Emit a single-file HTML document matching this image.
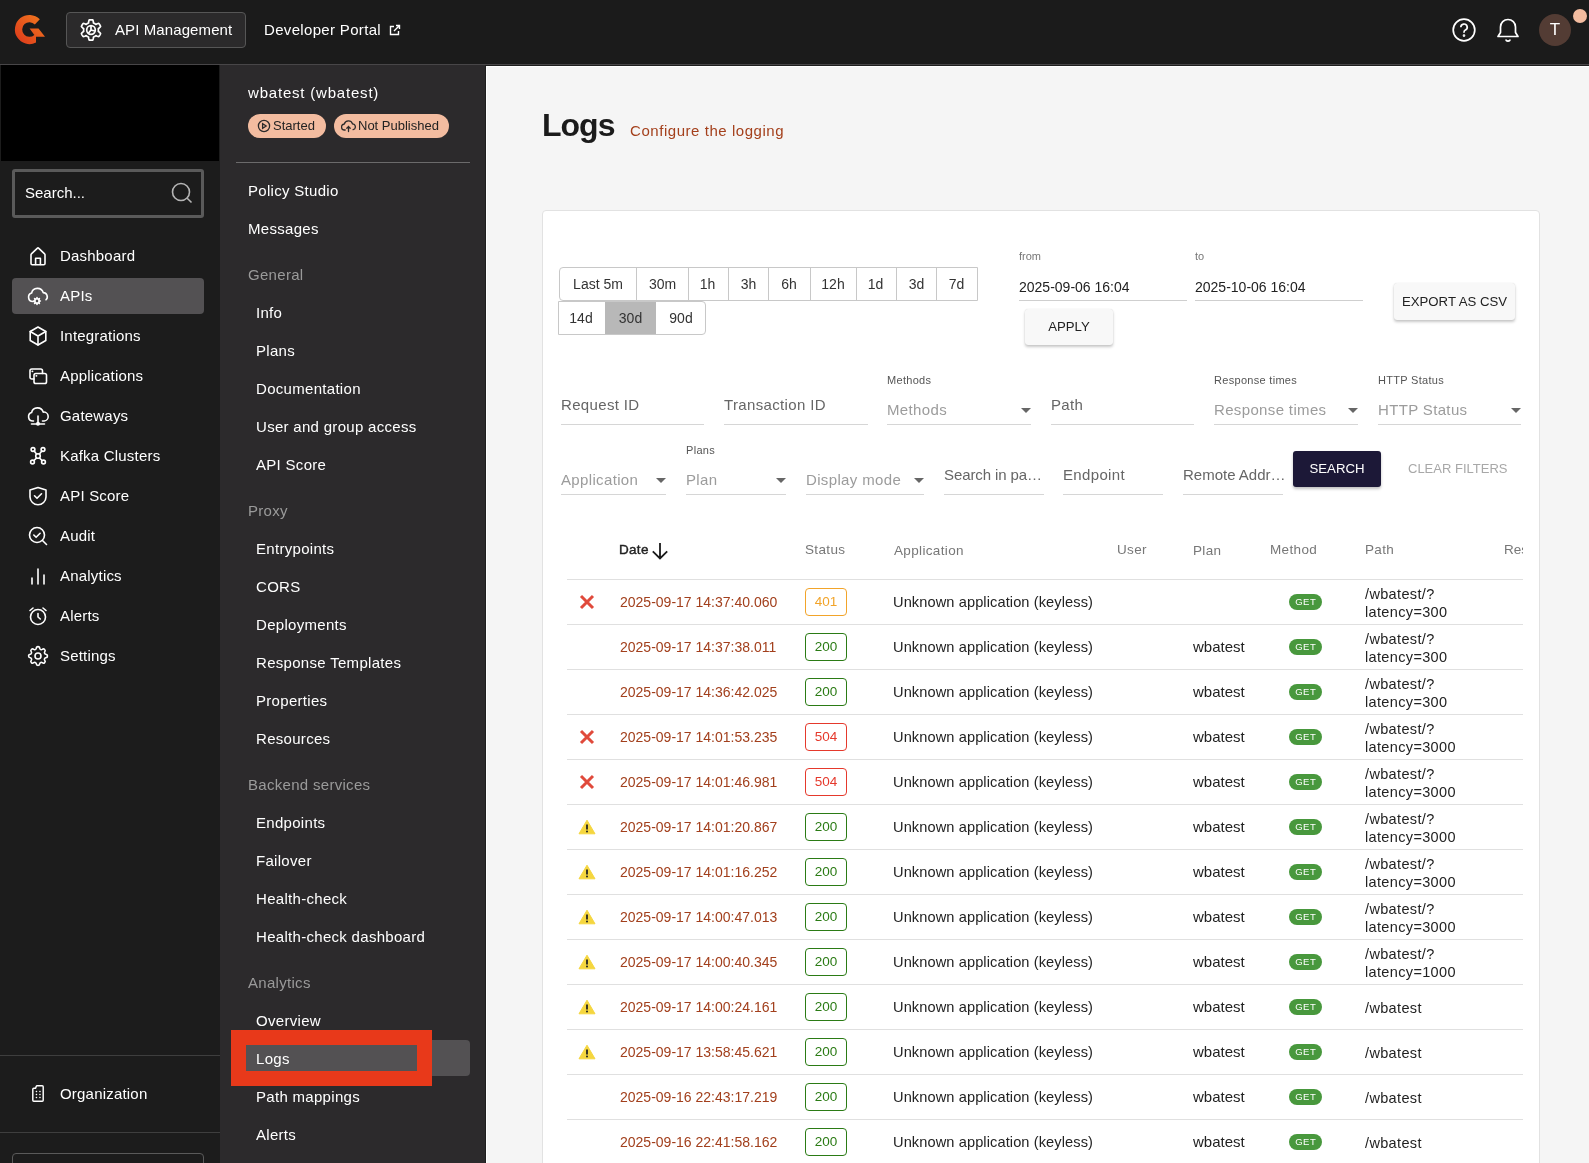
<!DOCTYPE html>
<html><head><meta charset="utf-8">
<style>
*{box-sizing:border-box;margin:0;padding:0}
html,body{width:1589px;height:1163px;overflow:hidden;background:#f5f5f5;font-family:"Liberation Sans",sans-serif;}
.a{position:absolute;white-space:nowrap}
#hdr{position:absolute;left:0;top:0;width:1589px;height:66px;background:#1b1b1b;border-bottom:1px solid #1e1e1e}
#hdr:after{content:"";position:absolute;left:0;top:64px;width:1589px;height:1px;background:#484648}
#side1{position:absolute;left:0;top:65px;width:220px;height:1098px;background:#1c1c1c}
#side2{position:absolute;left:220px;top:65px;width:266px;height:1098px;background:#2c2a2c;border-right:1px solid #1e1e1e}
#mainbg{position:absolute;left:486px;top:66px;width:1103px;height:1097px;background:#f5f5f5;border-left:1px solid #fff;border-top:1px solid #fff}
.nav{position:absolute;left:60px;color:#fff;font-size:15px;line-height:18px;letter-spacing:0.2px}
.ico{position:absolute;left:27px;width:22px;height:22px}
.s2{position:absolute;color:#fff;font-size:15px;line-height:18px;white-space:nowrap;letter-spacing:0.3px}
.s2h{position:absolute;color:#9a9a9a;font-size:15px;line-height:18px;white-space:nowrap;letter-spacing:0.3px}
#card{position:absolute;left:542px;top:210px;width:998px;height:1000px;background:#fff;border:1px solid #e3e3e3;border-radius:4px}
</style></head><body><div id="root" style="position:absolute;left:0;top:0;width:1589px;height:1163px;overflow:hidden;will-change:transform">
<div id="hdr">
<svg class="a" style="left:0;top:0" width="60" height="60" viewBox="0 0 60 60"><defs><linearGradient id="lg" x1="0" y1="1" x2="1" y2="0"><stop offset="0" stop-color="#dc361b"/><stop offset="1" stop-color="#f27c1f"/></linearGradient></defs><path fill="url(#lg)" d="M39.82 19.18 A14.6 14.6 0 1 0 36 42.57 L36 36.8 L45 36.8 L38.5 28.6 L29.6 28.6 L34.38 34.92 A7.3 7.3 0 1 1 34.84 24.52 Z"/></svg>
<div class="a" style="left:66px;top:12px;width:180px;height:36px;border:1px solid #565656;border-radius:4px;background:#2b2a2b"></div>
<svg class="a" style="left:79px;top:18px" width="24" height="24" viewBox="0 0 24 24" fill="none" stroke="#fff" stroke-width="1.7" stroke-linejoin="round"><path d="M12.00 1.80 L12.44 1.81 L12.89 1.84 L13.33 1.89 L13.77 1.95 L14.08 2.63 L14.28 3.50 L14.41 4.37 L14.53 5.05 L14.83 5.16 L15.13 5.29 L15.42 5.44 L15.70 5.59 L15.98 5.76 L16.24 5.94 L16.50 6.13 L16.76 6.33 L17.41 6.10 L18.22 5.78 L19.08 5.52 L19.81 5.44 L20.09 5.79 L20.36 6.15 L20.60 6.52 L20.83 6.90 L21.05 7.29 L21.24 7.69 L21.42 8.10 L21.58 8.51 L21.15 9.11 L20.50 9.72 L19.81 10.27 L19.29 10.72 L19.34 11.03 L19.37 11.36 L19.39 11.68 L19.40 12.00 L19.39 12.32 L19.37 12.64 L19.34 12.97 L19.29 13.28 L19.81 13.73 L20.50 14.28 L21.15 14.89 L21.58 15.49 L21.42 15.90 L21.24 16.31 L21.05 16.71 L20.83 17.10 L20.60 17.48 L20.36 17.85 L20.09 18.21 L19.81 18.56 L19.08 18.48 L18.22 18.22 L17.41 17.90 L16.76 17.67 L16.50 17.87 L16.24 18.06 L15.98 18.24 L15.70 18.41 L15.42 18.56 L15.13 18.71 L14.83 18.84 L14.53 18.95 L14.41 19.63 L14.28 20.50 L14.08 21.37 L13.77 22.05 L13.33 22.11 L12.89 22.16 L12.44 22.19 L12.00 22.20 L11.56 22.19 L11.11 22.16 L10.67 22.11 L10.23 22.05 L9.92 21.37 L9.72 20.50 L9.59 19.63 L9.47 18.95 L9.17 18.84 L8.87 18.71 L8.58 18.56 L8.30 18.41 L8.02 18.24 L7.76 18.06 L7.50 17.87 L7.24 17.67 L6.59 17.90 L5.78 18.22 L4.92 18.48 L4.19 18.56 L3.91 18.21 L3.64 17.85 L3.40 17.48 L3.17 17.10 L2.95 16.71 L2.76 16.31 L2.58 15.90 L2.42 15.49 L2.85 14.89 L3.50 14.28 L4.19 13.73 L4.71 13.28 L4.66 12.97 L4.63 12.64 L4.61 12.32 L4.60 12.00 L4.61 11.68 L4.63 11.36 L4.66 11.03 L4.71 10.72 L4.19 10.27 L3.50 9.72 L2.85 9.11 L2.42 8.51 L2.58 8.10 L2.76 7.69 L2.95 7.29 L3.17 6.90 L3.40 6.52 L3.64 6.15 L3.91 5.79 L4.19 5.44 L4.92 5.52 L5.78 5.78 L6.59 6.10 L7.24 6.33 L7.50 6.13 L7.76 5.94 L8.02 5.76 L8.30 5.59 L8.58 5.44 L8.87 5.29 L9.17 5.16 L9.47 5.05 L9.59 4.37 L9.72 3.50 L9.92 2.63 L10.23 1.95 L10.67 1.89 L11.11 1.84 L11.56 1.81Z"/><circle cx="12" cy="12" r="4.3"/><path d="M12 7.9V12l3.8 1M12 12l-2.6 3.2"/></svg>
<div class="a" style="left:115px;top:21px;color:#fff;font-size:15px;line-height:18px;letter-spacing:0.1px">API Management</div>
<div class="a" style="left:264px;top:21px;color:#fff;font-size:15px;line-height:18px;letter-spacing:0.33px">Developer Portal</div>
<svg class="a" style="left:388px;top:24px" width="13" height="13" viewBox="0 0 13 13" fill="none" stroke="#fff" stroke-width="1.4"><path d="M6 2.5H2.5v8h8V7M8 1.5h3.5V5M11.5 1.5L6 7"/></svg>
<svg class="a" style="left:1451px;top:17px" width="26" height="26" viewBox="0 0 26 26" fill="none" stroke="#fff" stroke-width="1.7"><circle cx="13" cy="13" r="10.8"/><path d="M9.8 10.2a3.2 3.2 0 1 1 4.6 2.9c-.9.5-1.4 1.1-1.4 2.1v.6"/><circle cx="13" cy="18.6" r=".5" fill="#fff"/></svg>
<svg class="a" style="left:1496px;top:17px" width="24" height="26" viewBox="0 0 24 26" fill="none" stroke="#fff" stroke-width="1.7" stroke-linejoin="round"><path d="M2 19.5h20l-2.5-4V10a7.5 7.5 0 0 0-15 0v5.5z"/><path d="M10 22.5a2 1.6 0 0 0 4 0"/></svg>
<div class="a" style="left:1539px;top:14px;width:32px;height:32px;border-radius:50%;background:#533c34;color:#fff;font-size:17px;line-height:32px;text-align:center">T</div>
<div class="a" style="left:1573px;top:9px;width:14px;height:14px;border-radius:50%;background:#f3bca0"></div>
</div>
<div id="side1">
<div class="a" style="left:1px;top:0;width:218px;height:96px;background:#000"></div>
<div class="a" style="left:12px;top:104px;width:192px;height:49px;border:3px solid #5a5a5a;border-radius:3px;background:#1c1c1c"></div>
<div class="a" style="left:25px;top:119px;color:#fff;font-size:15px;line-height:18px">Search...</div>
<svg class="a" style="left:169px;top:115px" width="26" height="26" viewBox="0 0 26 26" fill="none" stroke="#b5b5b5" stroke-width="1.6"><circle cx="12" cy="12" r="8.5"/><path d="M18.2 18.2l4.3 4.3"/></svg>
<div class="a" style="left:12px;top:213px;width:192px;height:36px;border-radius:4px;background:#535153"></div>
<svg class="a" style="left:26px;top:179px" width="24" height="24" viewBox="0 0 24 24" fill="none" stroke="#fff" stroke-width="1.6" stroke-linecap="round" stroke-linejoin="round"><path d="M5 10.8v8.7a1.2 1.2 0 0 0 1.2 1.2h11.6a1.2 1.2 0 0 0 1.2-1.2v-8.7a1.2 1.2 0 0 0-.4-.9L12.8 4.3a1.2 1.2 0 0 0-1.6 0L5.4 9.9a1.2 1.2 0 0 0-.4.9z"/><path d="M9.6 20.5v-6.2h4.8v6.2"/></svg>
<div class="nav" style="top:182px">Dashboard</div>
<svg class="a" style="left:26px;top:219px" width="24" height="24" viewBox="0 0 24 24" fill="none" stroke="#fff" stroke-width="1.6" stroke-linecap="round" stroke-linejoin="round"><path d="M7.5 17.5H6.8A4.3 4.3 0 0 1 5.6 9.1 6 6 0 0 1 17.2 8.6a4.2 4.2 0 0 1 2.8 7.2"/><circle cx="11" cy="17" r="2.2"/><path d="M11 13.6v1.2M11 19.2v1.2M7.6 17h1.2M13.2 17h1.2M8.6 14.6l.8.8M12.6 18.6l.8.8M8.6 19.4l.8-.8M12.6 15.4l.8-.8"/></svg>
<div class="nav" style="top:222px">APIs</div>
<svg class="a" style="left:26px;top:259px" width="24" height="24" viewBox="0 0 24 24" fill="none" stroke="#fff" stroke-width="1.6" stroke-linecap="round" stroke-linejoin="round"><path d="M12 3l7.8 4.5v9L12 21l-7.8-4.5v-9z"/><path d="M4.2 7.5L12 12l7.8-4.5M12 12v9"/></svg>
<div class="nav" style="top:262px">Integrations</div>
<svg class="a" style="left:26px;top:299px" width="24" height="24" viewBox="0 0 24 24" fill="none" stroke="#fff" stroke-width="1.6" stroke-linecap="round" stroke-linejoin="round"><rect x="8" y="9.5" width="12.5" height="10" rx="1.8"/><path d="M16.5 9.5V6.8A1.8 1.8 0 0 0 14.7 5H5.8A1.8 1.8 0 0 0 4 6.8v6.4A1.8 1.8 0 0 0 5.8 15H8"/><path d="M6.3 7.3h.2M10.3 11.8h.2" stroke-width="1.8"/></svg>
<div class="nav" style="top:302px">Applications</div>
<svg class="a" style="left:26px;top:339px" width="24" height="24" viewBox="0 0 24 24" fill="none" stroke="#fff" stroke-width="1.6" stroke-linecap="round" stroke-linejoin="round"><path d="M7.5 17H6.8A4.3 4.3 0 0 1 5.6 8.6 6 6 0 0 1 17.2 8.1a4.2 4.2 0 0 1 1 8.9H16.5"/><path d="M12 12v6.5M5.5 20h13"/><circle cx="12" cy="19.8" r="1.2"/></svg>
<div class="nav" style="top:342px">Gateways</div>
<svg class="a" style="left:26px;top:379px" width="24" height="24" viewBox="0 0 24 24" fill="none" stroke="#fff" stroke-width="1.6" stroke-linecap="round" stroke-linejoin="round"><circle cx="7" cy="5.5" r="1.9"/><circle cx="17" cy="5.5" r="1.9"/><circle cx="6.5" cy="18" r="1.9"/><circle cx="17.5" cy="18" r="1.9"/><path d="M8.2 7l2.3 3M15.8 7l-2.3 3M8 16.5l2.4-2.4M16 16.5l-2.4-2.4"/><circle cx="12" cy="12" r="2.3"/></svg>
<div class="nav" style="top:382px">Kafka Clusters</div>
<svg class="a" style="left:26px;top:419px" width="24" height="24" viewBox="0 0 24 24" fill="none" stroke="#fff" stroke-width="1.6" stroke-linecap="round" stroke-linejoin="round"><path d="M12 3.5l8 2.5v7a8 8 0 0 1-8 7.8 8 8 0 0 1-8-7.8V6z"/><path d="M8.5 11.8l2.5 2.5 4.5-4.5"/></svg>
<div class="nav" style="top:422px">API Score</div>
<svg class="a" style="left:26px;top:459px" width="24" height="24" viewBox="0 0 24 24" fill="none" stroke="#fff" stroke-width="1.6" stroke-linecap="round" stroke-linejoin="round"><circle cx="11" cy="11" r="7.5"/><path d="M16.5 16.5l4 4M7.8 11l2.3 2.3 4-4"/></svg>
<div class="nav" style="top:462px">Audit</div>
<svg class="a" style="left:26px;top:499px" width="24" height="24" viewBox="0 0 24 24" fill="none" stroke="#fff" stroke-width="1.6" stroke-linecap="round" stroke-linejoin="round"><path d="M6 20v-6M12 20V5M18 20v-9"/></svg>
<div class="nav" style="top:502px">Analytics</div>
<svg class="a" style="left:26px;top:539px" width="24" height="24" viewBox="0 0 24 24" fill="none" stroke="#fff" stroke-width="1.6" stroke-linecap="round" stroke-linejoin="round"><circle cx="12" cy="13" r="7.5"/><path d="M12 9.5V13l2.3 2M4 6.5l3-2.5M20 6.5l-3-2.5"/></svg>
<div class="nav" style="top:542px">Alerts</div>
<svg class="a" style="left:26px;top:579px" width="24" height="24" viewBox="0 0 24 24" fill="none" stroke="#fff" stroke-width="1.6" stroke-linecap="round" stroke-linejoin="round"><path d="M10.3 4.3a1.7 1.7 0 0 1 3.4 0 1.7 1.7 0 0 0 2.6 1.1 1.7 1.7 0 0 1 2.4 2.4 1.7 1.7 0 0 0 1 2.5 1.7 1.7 0 0 1 0 3.4 1.7 1.7 0 0 0-1 2.6 1.7 1.7 0 0 1-2.4 2.4 1.7 1.7 0 0 0-2.6 1 1.7 1.7 0 0 1-3.4 0 1.7 1.7 0 0 0-2.6-1 1.7 1.7 0 0 1-2.4-2.4 1.7 1.7 0 0 0-1-2.6 1.7 1.7 0 0 1 0-3.4 1.7 1.7 0 0 0 1-2.5A1.7 1.7 0 0 1 7.7 5.4a1.7 1.7 0 0 0 2.6-1.1z"/><circle cx="12" cy="12" r="3"/></svg>
<div class="nav" style="top:582px">Settings</div>
<div class="a" style="left:0;top:990px;width:220px;height:1px;background:#3e3e3e"></div>
<svg class="a" style="left:26px;top:1016px" width="24" height="24" viewBox="0 0 24 24" fill="none" stroke="#fff" stroke-width="1.45" stroke-linecap="round" stroke-linejoin="round"><path d="M6.8 19.3V8.2a1 1 0 0 1 1-1h1.8l.6-1.8a1 1 0 0 1 1-.7h5a1 1 0 0 1 1 1v13.6a1 1 0 0 1-1 1H7.8a1 1 0 0 1-1-1z"/><path d="M10.4 10.5h.1M13.9 10.5h.1M10.4 13.5h.1M13.9 13.5h.1M10.4 16.5h.1M13.9 16.5h.1" stroke-width="1.5"/></svg>
<div class="nav" style="top:1020px">Organization</div>
<div class="a" style="left:0;top:1067px;width:220px;height:1px;background:#3e3e3e"></div>
<div class="a" style="left:12px;top:1088px;width:192px;height:40px;border:1px solid #5a5a5a;border-radius:4px"></div>
</div>
<div id="side2">
<div class="s2" style="left:28px;top:19px;letter-spacing:0.8px">wbatest (wbatest)</div>
<div class="a" style="left:28px;top:49px;width:78px;height:24px;border-radius:12px;background:#f3bca0"></div>
<svg class="a" style="left:37px;top:54px" width="14" height="14" viewBox="0 0 14 14" fill="none" stroke="#2b2a2b" stroke-width="1.3"><circle cx="7" cy="7" r="5.6" /><path d="M5.6 4.6v4.8L9.2 7z" fill="none"/></svg>
<div class="a" style="left:53px;top:52px;color:#222;font-size:13px;line-height:18px">Started</div>
<div class="a" style="left:114px;top:49px;width:115px;height:24px;border-radius:12px;background:#f3bca0"></div>
<svg class="a" style="left:121px;top:54px" width="15" height="14" viewBox="0 0 15 14" fill="none" stroke="#2b2a2b" stroke-width="1.3" stroke-linecap="round"><path d="M4.2 11H3.8A3 3 0 0 1 3.3 5 4.3 4.3 0 0 1 11.5 4.8a3 3 0 0 1 .6 5.9"/><path d="M7.5 12.5V7.5M5.8 9.2l1.7-1.7 1.7 1.7"/></svg>
<div class="a" style="left:138px;top:52px;color:#222;font-size:13px;line-height:18px">Not Published</div>
<div class="a" style="left:16px;top:97px;width:234px;height:1px;background:#6b6a6b"></div>
<div class="s2" style="left:28px;top:117px">Policy Studio</div>
<div class="s2" style="left:28px;top:155px">Messages</div>
<div class="s2h" style="left:28px;top:201px">General</div>
<div class="s2" style="left:36px;top:239px">Info</div>
<div class="s2" style="left:36px;top:277px">Plans</div>
<div class="s2" style="left:36px;top:315px">Documentation</div>
<div class="s2" style="left:36px;top:353px">User and group access</div>
<div class="s2" style="left:36px;top:391px">API Score</div>
<div class="s2h" style="left:28px;top:437px">Proxy</div>
<div class="s2" style="left:36px;top:475px">Entrypoints</div>
<div class="s2" style="left:36px;top:513px">CORS</div>
<div class="s2" style="left:36px;top:551px">Deployments</div>
<div class="s2" style="left:36px;top:589px">Response Templates</div>
<div class="s2" style="left:36px;top:627px">Properties</div>
<div class="s2" style="left:36px;top:665px">Resources</div>
<div class="s2h" style="left:28px;top:711px">Backend services</div>
<div class="s2" style="left:36px;top:749px">Endpoints</div>
<div class="s2" style="left:36px;top:787px">Failover</div>
<div class="s2" style="left:36px;top:825px">Health-check</div>
<div class="s2" style="left:36px;top:863px">Health-check dashboard</div>
<div class="s2h" style="left:28px;top:909px">Analytics</div>
<div class="s2" style="left:36px;top:947px">Overview</div>
<div class="a" style="left:16px;top:975px;width:234px;height:36px;border-radius:4px;background:#535153"></div>
<div class="a" style="left:11px;top:965px;width:201px;height:56px;border:15px solid #e8391a"></div>
<div class="s2" style="left:36px;top:985px">Logs</div>
<div class="s2" style="left:36px;top:1023px">Path mappings</div>
<div class="s2" style="left:36px;top:1061px">Alerts</div>
</div>
<div id="mainbg"></div>
<div id="main">
<div class="a" style="left:542px;top:107px;color:#1b1b1b;font-size:32px;line-height:36px;font-weight:bold;letter-spacing:-1px">Logs</div>
<div class="a" style="left:630px;top:122px;color:#a4401c;font-size:15px;line-height:18px;letter-spacing:0.55px">Configure the logging</div>
<div class="a" style="left:542px;top:210px;width:998px;height:1000px;background:#fff;border:1px solid #e2e2e2;border-radius:4px"></div>
<div class="a" style="left:559px;top:267px;width:419px;height:34px;border:1px solid #c8c8c8;border-radius:4px 0 0 4px"></div>
<div class="a" style="left:560px;top:275px;width:76px;text-align:center;color:#333;font-size:14px;line-height:18px">Last 5m</div>
<div class="a" style="left:636px;top:268px;width:1px;height:32px;background:#c8c8c8"></div>
<div class="a" style="left:636px;top:275px;width:53px;text-align:center;color:#333;font-size:14px;line-height:18px">30m</div>
<div class="a" style="left:688px;top:268px;width:1px;height:32px;background:#c8c8c8"></div>
<div class="a" style="left:688px;top:275px;width:39px;text-align:center;color:#333;font-size:14px;line-height:18px">1h</div>
<div class="a" style="left:728px;top:268px;width:1px;height:32px;background:#c8c8c8"></div>
<div class="a" style="left:728px;top:275px;width:41px;text-align:center;color:#333;font-size:14px;line-height:18px">3h</div>
<div class="a" style="left:768px;top:268px;width:1px;height:32px;background:#c8c8c8"></div>
<div class="a" style="left:768px;top:275px;width:42px;text-align:center;color:#333;font-size:14px;line-height:18px">6h</div>
<div class="a" style="left:810px;top:268px;width:1px;height:32px;background:#c8c8c8"></div>
<div class="a" style="left:810px;top:275px;width:46px;text-align:center;color:#333;font-size:14px;line-height:18px">12h</div>
<div class="a" style="left:856px;top:268px;width:1px;height:32px;background:#c8c8c8"></div>
<div class="a" style="left:856px;top:275px;width:39px;text-align:center;color:#333;font-size:14px;line-height:18px">1d</div>
<div class="a" style="left:896px;top:268px;width:1px;height:32px;background:#c8c8c8"></div>
<div class="a" style="left:896px;top:275px;width:41px;text-align:center;color:#333;font-size:14px;line-height:18px">3d</div>
<div class="a" style="left:936px;top:268px;width:1px;height:32px;background:#c8c8c8"></div>
<div class="a" style="left:936px;top:275px;width:41px;text-align:center;color:#333;font-size:14px;line-height:18px">7d</div>
<div class="a" style="left:558px;top:301px;width:148px;height:34px;border:1px solid #c8c8c8;border-radius:0 4px 4px 0;background:#fff"></div>
<div class="a" style="left:605px;top:302px;width:51px;height:32px;background:#b8b8b8"></div>
<div class="a" style="left:558px;top:309px;width:46px;text-align:center;color:#333;font-size:14px;line-height:18px">14d</div>
<div class="a" style="left:605px;top:309px;width:51px;text-align:center;color:#333;font-size:14px;line-height:18px">30d</div>
<div class="a" style="left:656px;top:309px;width:50px;text-align:center;color:#333;font-size:14px;line-height:18px">90d</div>
<div class="a" style="left:1019px;top:249px;color:#777;font-size:11px;line-height:14px">from</div>
<div class="a" style="left:1019px;top:279px;color:#222;font-size:14px;line-height:16px">2025-09-06 16:04</div>
<div class="a" style="left:1019px;top:300px;width:168px;height:1px;background:#cfcfcf"></div>
<div class="a" style="left:1195px;top:249px;color:#777;font-size:11px;line-height:14px">to</div>
<div class="a" style="left:1195px;top:279px;color:#222;font-size:14px;line-height:16px">2025-10-06 16:04</div>
<div class="a" style="left:1195px;top:300px;width:168px;height:1px;background:#cfcfcf"></div>
<div class="a" style="left:1025px;top:309px;width:88px;height:36px;background:#f8f8f8;border-radius:3px;box-shadow:0 2px 3px rgba(0,0,0,.22),0 0 1px rgba(0,0,0,.15);color:#222;font-size:13.2px;line-height:36px;text-align:center">APPLY</div>
<div class="a" style="left:1394px;top:283px;width:121px;height:37px;background:#f8f8f8;border-radius:3px;box-shadow:0 2px 3px rgba(0,0,0,.22),0 0 1px rgba(0,0,0,.15);color:#222;font-size:13.2px;line-height:37px;text-align:center">EXPORT AS CSV</div>
<div class="a" style="left:561px;top:396px;color:#666;font-size:15px;line-height:18px;letter-spacing:0.35px">Request ID</div>
<div class="a" style="left:561px;top:424px;width:143px;height:1px;background:#d6d6d6"></div>
<div class="a" style="left:724px;top:396px;color:#666;font-size:15px;line-height:18px;letter-spacing:0.35px">Transaction ID</div>
<div class="a" style="left:724px;top:424px;width:144px;height:1px;background:#d6d6d6"></div>
<div class="a" style="left:887px;top:374px;color:#555;font-size:11px;line-height:13px;letter-spacing:0.3px">Methods</div>
<div class="a" style="left:887px;top:401px;color:#9c9c9c;font-size:15px;line-height:18px;letter-spacing:0.35px">Methods</div>
<div class="a" style="left:1021px;top:408px;width:0;height:0;border-left:5px solid transparent;border-right:5px solid transparent;border-top:5px solid #666"></div>
<div class="a" style="left:887px;top:424px;width:144px;height:1px;background:#d6d6d6"></div>
<div class="a" style="left:1051px;top:396px;color:#666;font-size:15px;line-height:18px;letter-spacing:0.35px">Path</div>
<div class="a" style="left:1051px;top:424px;width:143px;height:1px;background:#d6d6d6"></div>
<div class="a" style="left:1214px;top:374px;color:#555;font-size:11px;line-height:13px;letter-spacing:0.3px">Response times</div>
<div class="a" style="left:1214px;top:401px;color:#9c9c9c;font-size:15px;line-height:18px;letter-spacing:0.35px">Response times</div>
<div class="a" style="left:1348px;top:408px;width:0;height:0;border-left:5px solid transparent;border-right:5px solid transparent;border-top:5px solid #666"></div>
<div class="a" style="left:1214px;top:424px;width:144px;height:1px;background:#d6d6d6"></div>
<div class="a" style="left:1378px;top:374px;color:#555;font-size:11px;line-height:13px;letter-spacing:0.3px">HTTP Status</div>
<div class="a" style="left:1378px;top:401px;color:#9c9c9c;font-size:15px;line-height:18px;letter-spacing:0.35px">HTTP Status</div>
<div class="a" style="left:1511px;top:408px;width:0;height:0;border-left:5px solid transparent;border-right:5px solid transparent;border-top:5px solid #666"></div>
<div class="a" style="left:1378px;top:424px;width:143px;height:1px;background:#d6d6d6"></div>
<div class="a" style="left:561px;top:471px;color:#9c9c9c;font-size:15px;line-height:18px;letter-spacing:0.35px">Application</div>
<div class="a" style="left:656px;top:478px;width:0;height:0;border-left:5px solid transparent;border-right:5px solid transparent;border-top:5px solid #666"></div>
<div class="a" style="left:561px;top:494px;width:105px;height:1px;background:#d6d6d6"></div>
<div class="a" style="left:686px;top:444px;color:#555;font-size:11px;line-height:13px;letter-spacing:0.3px">Plans</div>
<div class="a" style="left:686px;top:471px;color:#9c9c9c;font-size:15px;line-height:18px;letter-spacing:0.35px">Plan</div>
<div class="a" style="left:776px;top:478px;width:0;height:0;border-left:5px solid transparent;border-right:5px solid transparent;border-top:5px solid #666"></div>
<div class="a" style="left:686px;top:494px;width:100px;height:1px;background:#d6d6d6"></div>
<div class="a" style="left:806px;top:471px;color:#9c9c9c;font-size:15px;line-height:18px;letter-spacing:0.35px">Display mode</div>
<div class="a" style="left:914px;top:478px;width:0;height:0;border-left:5px solid transparent;border-right:5px solid transparent;border-top:5px solid #666"></div>
<div class="a" style="left:806px;top:494px;width:118px;height:1px;background:#d6d6d6"></div>
<div class="a" style="left:944px;top:466px;color:#666;font-size:15px;line-height:18px;letter-spacing:-0.1px">Search in pa…</div>
<div class="a" style="left:944px;top:494px;width:100px;height:1px;background:#d6d6d6"></div>
<div class="a" style="left:1063px;top:466px;color:#666;font-size:15px;line-height:18px;letter-spacing:0.35px">Endpoint</div>
<div class="a" style="left:1063px;top:494px;width:100px;height:1px;background:#d6d6d6"></div>
<div class="a" style="left:1183px;top:466px;color:#666;font-size:15px;line-height:18px;letter-spacing:0px">Remote Addr…</div>
<div class="a" style="left:1183px;top:494px;width:100px;height:1px;background:#d6d6d6"></div>
<div class="a" style="left:1293px;top:451px;width:88px;height:36px;background:#1c1837;border-radius:3px;box-shadow:0 2px 3px rgba(0,0,0,.25);color:#fff;font-size:13.2px;line-height:36px;text-align:center">SEARCH</div>
<div class="a" style="left:1408px;top:461px;color:#a8a8a8;font-size:13px;line-height:16px">CLEAR FILTERS</div>
<div class="a" style="left:619px;top:542px;color:#222;font-size:13.5px;line-height:16px;-webkit-text-stroke:0.4px #222;letter-spacing:0.3px">Date</div>
<svg class="a" style="left:651px;top:542px" width="18" height="18" viewBox="0 0 18 18" fill="none" stroke="#1a1a1a" stroke-width="1.8"><path d="M9 1v15.5M1.8 9.3l7.2 7.2 7.2-7.2"/></svg>
<div class="a" style="left:805px;top:542px;color:#777;font-size:13.5px;line-height:16px;letter-spacing:0.35px">Status</div>
<div class="a" style="left:894px;top:543px;color:#777;font-size:13.5px;line-height:16px;letter-spacing:0.35px">Application</div>
<div class="a" style="left:1117px;top:542px;color:#777;font-size:13.5px;line-height:16px;letter-spacing:0.35px">User</div>
<div class="a" style="left:1193px;top:543px;color:#777;font-size:13.5px;line-height:16px;letter-spacing:0.35px">Plan</div>
<div class="a" style="left:1270px;top:542px;color:#777;font-size:13.5px;line-height:16px;letter-spacing:0.35px">Method</div>
<div class="a" style="left:1365px;top:542px;color:#777;font-size:13.5px;line-height:16px;letter-spacing:0.35px">Path</div>
<div class="a" style="left:1504px;top:542px;width:19px;overflow:hidden;color:#777;font-size:13.5px;line-height:16px">Response</div>
<div class="a" style="left:567px;top:579px;width:956px;height:1px;background:#e0e0e0"></div>
<svg class="a" style="left:579px;top:594px" width="16" height="16" viewBox="0 0 16 16" stroke="#e04a3b" stroke-width="3"><path d="M2 2l12 12M14 2L2 14"/></svg>
<div class="a" style="left:620px;top:594px;color:#a23f1c;font-size:14px;line-height:16px">2025-09-17 14:37:40.060</div>
<div class="a" style="left:805px;top:588px;width:42px;height:28px;border:1px solid #f2a42a;border-radius:4px;color:#f2a42a;font-size:13.5px;line-height:26px;text-align:center">401</div>
<div class="a" style="left:893px;top:594px;color:#222;font-size:14.6px;line-height:16px;letter-spacing:0.1px">Unknown application (keyless)</div>
<div class="a" style="left:1289px;top:594px;width:33px;height:16px;border-radius:8px;background:#48983d;color:#fff;font-size:9.5px;line-height:16px;text-align:center;letter-spacing:0.6px;text-indent:0.6px">GET</div>
<div class="a" style="left:1365px;top:585px;color:#222;font-size:14.5px;line-height:18px;letter-spacing:0.35px">/wbatest/?<br>latency=300</div>
<div class="a" style="left:567px;top:624px;width:956px;height:1px;background:#e0e0e0"></div>
<div class="a" style="left:620px;top:639px;color:#a23f1c;font-size:14px;line-height:16px">2025-09-17 14:37:38.011</div>
<div class="a" style="left:805px;top:633px;width:42px;height:28px;border:1px solid #2b7b15;border-radius:4px;color:#2b7b15;font-size:13.5px;line-height:26px;text-align:center">200</div>
<div class="a" style="left:893px;top:639px;color:#222;font-size:14.6px;line-height:16px;letter-spacing:0.1px">Unknown application (keyless)</div>
<div class="a" style="left:1193px;top:639px;color:#222;font-size:15px;line-height:16px">wbatest</div>
<div class="a" style="left:1289px;top:639px;width:33px;height:16px;border-radius:8px;background:#48983d;color:#fff;font-size:9.5px;line-height:16px;text-align:center;letter-spacing:0.6px;text-indent:0.6px">GET</div>
<div class="a" style="left:1365px;top:630px;color:#222;font-size:14.5px;line-height:18px;letter-spacing:0.35px">/wbatest/?<br>latency=300</div>
<div class="a" style="left:567px;top:669px;width:956px;height:1px;background:#e0e0e0"></div>
<div class="a" style="left:620px;top:684px;color:#a23f1c;font-size:14px;line-height:16px">2025-09-17 14:36:42.025</div>
<div class="a" style="left:805px;top:678px;width:42px;height:28px;border:1px solid #2b7b15;border-radius:4px;color:#2b7b15;font-size:13.5px;line-height:26px;text-align:center">200</div>
<div class="a" style="left:893px;top:684px;color:#222;font-size:14.6px;line-height:16px;letter-spacing:0.1px">Unknown application (keyless)</div>
<div class="a" style="left:1193px;top:684px;color:#222;font-size:15px;line-height:16px">wbatest</div>
<div class="a" style="left:1289px;top:684px;width:33px;height:16px;border-radius:8px;background:#48983d;color:#fff;font-size:9.5px;line-height:16px;text-align:center;letter-spacing:0.6px;text-indent:0.6px">GET</div>
<div class="a" style="left:1365px;top:675px;color:#222;font-size:14.5px;line-height:18px;letter-spacing:0.35px">/wbatest/?<br>latency=300</div>
<div class="a" style="left:567px;top:714px;width:956px;height:1px;background:#e0e0e0"></div>
<svg class="a" style="left:579px;top:729px" width="16" height="16" viewBox="0 0 16 16" stroke="#e04a3b" stroke-width="3"><path d="M2 2l12 12M14 2L2 14"/></svg>
<div class="a" style="left:620px;top:729px;color:#a23f1c;font-size:14px;line-height:16px">2025-09-17 14:01:53.235</div>
<div class="a" style="left:805px;top:723px;width:42px;height:28px;border:1px solid #e5392c;border-radius:4px;color:#e5392c;font-size:13.5px;line-height:26px;text-align:center">504</div>
<div class="a" style="left:893px;top:729px;color:#222;font-size:14.6px;line-height:16px;letter-spacing:0.1px">Unknown application (keyless)</div>
<div class="a" style="left:1193px;top:729px;color:#222;font-size:15px;line-height:16px">wbatest</div>
<div class="a" style="left:1289px;top:729px;width:33px;height:16px;border-radius:8px;background:#48983d;color:#fff;font-size:9.5px;line-height:16px;text-align:center;letter-spacing:0.6px;text-indent:0.6px">GET</div>
<div class="a" style="left:1365px;top:720px;color:#222;font-size:14.5px;line-height:18px;letter-spacing:0.35px">/wbatest/?<br>latency=3000</div>
<div class="a" style="left:567px;top:759px;width:956px;height:1px;background:#e0e0e0"></div>
<svg class="a" style="left:579px;top:774px" width="16" height="16" viewBox="0 0 16 16" stroke="#e04a3b" stroke-width="3"><path d="M2 2l12 12M14 2L2 14"/></svg>
<div class="a" style="left:620px;top:774px;color:#a23f1c;font-size:14px;line-height:16px">2025-09-17 14:01:46.981</div>
<div class="a" style="left:805px;top:768px;width:42px;height:28px;border:1px solid #e5392c;border-radius:4px;color:#e5392c;font-size:13.5px;line-height:26px;text-align:center">504</div>
<div class="a" style="left:893px;top:774px;color:#222;font-size:14.6px;line-height:16px;letter-spacing:0.1px">Unknown application (keyless)</div>
<div class="a" style="left:1193px;top:774px;color:#222;font-size:15px;line-height:16px">wbatest</div>
<div class="a" style="left:1289px;top:774px;width:33px;height:16px;border-radius:8px;background:#48983d;color:#fff;font-size:9.5px;line-height:16px;text-align:center;letter-spacing:0.6px;text-indent:0.6px">GET</div>
<div class="a" style="left:1365px;top:765px;color:#222;font-size:14.5px;line-height:18px;letter-spacing:0.35px">/wbatest/?<br>latency=3000</div>
<div class="a" style="left:567px;top:804px;width:956px;height:1px;background:#e0e0e0"></div>
<svg class="a" style="left:578px;top:819px" width="18" height="16" viewBox="0 0 18 16"><path d="M9 1.2L17 14.8H1z" fill="#f5d63f" stroke="#f5d63f" stroke-width="1" stroke-linejoin="round"/><path d="M9 5.5v5" stroke="#222" stroke-width="1.8"/><circle cx="9" cy="12.6" r="1" fill="#222"/></svg>
<div class="a" style="left:620px;top:819px;color:#a23f1c;font-size:14px;line-height:16px">2025-09-17 14:01:20.867</div>
<div class="a" style="left:805px;top:813px;width:42px;height:28px;border:1px solid #2b7b15;border-radius:4px;color:#2b7b15;font-size:13.5px;line-height:26px;text-align:center">200</div>
<div class="a" style="left:893px;top:819px;color:#222;font-size:14.6px;line-height:16px;letter-spacing:0.1px">Unknown application (keyless)</div>
<div class="a" style="left:1193px;top:819px;color:#222;font-size:15px;line-height:16px">wbatest</div>
<div class="a" style="left:1289px;top:819px;width:33px;height:16px;border-radius:8px;background:#48983d;color:#fff;font-size:9.5px;line-height:16px;text-align:center;letter-spacing:0.6px;text-indent:0.6px">GET</div>
<div class="a" style="left:1365px;top:810px;color:#222;font-size:14.5px;line-height:18px;letter-spacing:0.35px">/wbatest/?<br>latency=3000</div>
<div class="a" style="left:567px;top:849px;width:956px;height:1px;background:#e0e0e0"></div>
<svg class="a" style="left:578px;top:864px" width="18" height="16" viewBox="0 0 18 16"><path d="M9 1.2L17 14.8H1z" fill="#f5d63f" stroke="#f5d63f" stroke-width="1" stroke-linejoin="round"/><path d="M9 5.5v5" stroke="#222" stroke-width="1.8"/><circle cx="9" cy="12.6" r="1" fill="#222"/></svg>
<div class="a" style="left:620px;top:864px;color:#a23f1c;font-size:14px;line-height:16px">2025-09-17 14:01:16.252</div>
<div class="a" style="left:805px;top:858px;width:42px;height:28px;border:1px solid #2b7b15;border-radius:4px;color:#2b7b15;font-size:13.5px;line-height:26px;text-align:center">200</div>
<div class="a" style="left:893px;top:864px;color:#222;font-size:14.6px;line-height:16px;letter-spacing:0.1px">Unknown application (keyless)</div>
<div class="a" style="left:1193px;top:864px;color:#222;font-size:15px;line-height:16px">wbatest</div>
<div class="a" style="left:1289px;top:864px;width:33px;height:16px;border-radius:8px;background:#48983d;color:#fff;font-size:9.5px;line-height:16px;text-align:center;letter-spacing:0.6px;text-indent:0.6px">GET</div>
<div class="a" style="left:1365px;top:855px;color:#222;font-size:14.5px;line-height:18px;letter-spacing:0.35px">/wbatest/?<br>latency=3000</div>
<div class="a" style="left:567px;top:894px;width:956px;height:1px;background:#e0e0e0"></div>
<svg class="a" style="left:578px;top:909px" width="18" height="16" viewBox="0 0 18 16"><path d="M9 1.2L17 14.8H1z" fill="#f5d63f" stroke="#f5d63f" stroke-width="1" stroke-linejoin="round"/><path d="M9 5.5v5" stroke="#222" stroke-width="1.8"/><circle cx="9" cy="12.6" r="1" fill="#222"/></svg>
<div class="a" style="left:620px;top:909px;color:#a23f1c;font-size:14px;line-height:16px">2025-09-17 14:00:47.013</div>
<div class="a" style="left:805px;top:903px;width:42px;height:28px;border:1px solid #2b7b15;border-radius:4px;color:#2b7b15;font-size:13.5px;line-height:26px;text-align:center">200</div>
<div class="a" style="left:893px;top:909px;color:#222;font-size:14.6px;line-height:16px;letter-spacing:0.1px">Unknown application (keyless)</div>
<div class="a" style="left:1193px;top:909px;color:#222;font-size:15px;line-height:16px">wbatest</div>
<div class="a" style="left:1289px;top:909px;width:33px;height:16px;border-radius:8px;background:#48983d;color:#fff;font-size:9.5px;line-height:16px;text-align:center;letter-spacing:0.6px;text-indent:0.6px">GET</div>
<div class="a" style="left:1365px;top:900px;color:#222;font-size:14.5px;line-height:18px;letter-spacing:0.35px">/wbatest/?<br>latency=3000</div>
<div class="a" style="left:567px;top:939px;width:956px;height:1px;background:#e0e0e0"></div>
<svg class="a" style="left:578px;top:954px" width="18" height="16" viewBox="0 0 18 16"><path d="M9 1.2L17 14.8H1z" fill="#f5d63f" stroke="#f5d63f" stroke-width="1" stroke-linejoin="round"/><path d="M9 5.5v5" stroke="#222" stroke-width="1.8"/><circle cx="9" cy="12.6" r="1" fill="#222"/></svg>
<div class="a" style="left:620px;top:954px;color:#a23f1c;font-size:14px;line-height:16px">2025-09-17 14:00:40.345</div>
<div class="a" style="left:805px;top:948px;width:42px;height:28px;border:1px solid #2b7b15;border-radius:4px;color:#2b7b15;font-size:13.5px;line-height:26px;text-align:center">200</div>
<div class="a" style="left:893px;top:954px;color:#222;font-size:14.6px;line-height:16px;letter-spacing:0.1px">Unknown application (keyless)</div>
<div class="a" style="left:1193px;top:954px;color:#222;font-size:15px;line-height:16px">wbatest</div>
<div class="a" style="left:1289px;top:954px;width:33px;height:16px;border-radius:8px;background:#48983d;color:#fff;font-size:9.5px;line-height:16px;text-align:center;letter-spacing:0.6px;text-indent:0.6px">GET</div>
<div class="a" style="left:1365px;top:945px;color:#222;font-size:14.5px;line-height:18px;letter-spacing:0.35px">/wbatest/?<br>latency=1000</div>
<div class="a" style="left:567px;top:984px;width:956px;height:1px;background:#e0e0e0"></div>
<svg class="a" style="left:578px;top:999px" width="18" height="16" viewBox="0 0 18 16"><path d="M9 1.2L17 14.8H1z" fill="#f5d63f" stroke="#f5d63f" stroke-width="1" stroke-linejoin="round"/><path d="M9 5.5v5" stroke="#222" stroke-width="1.8"/><circle cx="9" cy="12.6" r="1" fill="#222"/></svg>
<div class="a" style="left:620px;top:999px;color:#a23f1c;font-size:14px;line-height:16px">2025-09-17 14:00:24.161</div>
<div class="a" style="left:805px;top:993px;width:42px;height:28px;border:1px solid #2b7b15;border-radius:4px;color:#2b7b15;font-size:13.5px;line-height:26px;text-align:center">200</div>
<div class="a" style="left:893px;top:999px;color:#222;font-size:14.6px;line-height:16px;letter-spacing:0.1px">Unknown application (keyless)</div>
<div class="a" style="left:1193px;top:999px;color:#222;font-size:15px;line-height:16px">wbatest</div>
<div class="a" style="left:1289px;top:999px;width:33px;height:16px;border-radius:8px;background:#48983d;color:#fff;font-size:9.5px;line-height:16px;text-align:center;letter-spacing:0.6px;text-indent:0.6px">GET</div>
<div class="a" style="left:1365px;top:1000px;color:#222;font-size:14.5px;line-height:16px;letter-spacing:0.35px">/wbatest</div>
<div class="a" style="left:567px;top:1029px;width:956px;height:1px;background:#e0e0e0"></div>
<svg class="a" style="left:578px;top:1044px" width="18" height="16" viewBox="0 0 18 16"><path d="M9 1.2L17 14.8H1z" fill="#f5d63f" stroke="#f5d63f" stroke-width="1" stroke-linejoin="round"/><path d="M9 5.5v5" stroke="#222" stroke-width="1.8"/><circle cx="9" cy="12.6" r="1" fill="#222"/></svg>
<div class="a" style="left:620px;top:1044px;color:#a23f1c;font-size:14px;line-height:16px">2025-09-17 13:58:45.621</div>
<div class="a" style="left:805px;top:1038px;width:42px;height:28px;border:1px solid #2b7b15;border-radius:4px;color:#2b7b15;font-size:13.5px;line-height:26px;text-align:center">200</div>
<div class="a" style="left:893px;top:1044px;color:#222;font-size:14.6px;line-height:16px;letter-spacing:0.1px">Unknown application (keyless)</div>
<div class="a" style="left:1193px;top:1044px;color:#222;font-size:15px;line-height:16px">wbatest</div>
<div class="a" style="left:1289px;top:1044px;width:33px;height:16px;border-radius:8px;background:#48983d;color:#fff;font-size:9.5px;line-height:16px;text-align:center;letter-spacing:0.6px;text-indent:0.6px">GET</div>
<div class="a" style="left:1365px;top:1045px;color:#222;font-size:14.5px;line-height:16px;letter-spacing:0.35px">/wbatest</div>
<div class="a" style="left:567px;top:1074px;width:956px;height:1px;background:#e0e0e0"></div>
<div class="a" style="left:620px;top:1089px;color:#a23f1c;font-size:14px;line-height:16px">2025-09-16 22:43:17.219</div>
<div class="a" style="left:805px;top:1083px;width:42px;height:28px;border:1px solid #2b7b15;border-radius:4px;color:#2b7b15;font-size:13.5px;line-height:26px;text-align:center">200</div>
<div class="a" style="left:893px;top:1089px;color:#222;font-size:14.6px;line-height:16px;letter-spacing:0.1px">Unknown application (keyless)</div>
<div class="a" style="left:1193px;top:1089px;color:#222;font-size:15px;line-height:16px">wbatest</div>
<div class="a" style="left:1289px;top:1089px;width:33px;height:16px;border-radius:8px;background:#48983d;color:#fff;font-size:9.5px;line-height:16px;text-align:center;letter-spacing:0.6px;text-indent:0.6px">GET</div>
<div class="a" style="left:1365px;top:1090px;color:#222;font-size:14.5px;line-height:16px;letter-spacing:0.35px">/wbatest</div>
<div class="a" style="left:567px;top:1119px;width:956px;height:1px;background:#e0e0e0"></div>
<div class="a" style="left:620px;top:1134px;color:#a23f1c;font-size:14px;line-height:16px">2025-09-16 22:41:58.162</div>
<div class="a" style="left:805px;top:1128px;width:42px;height:28px;border:1px solid #2b7b15;border-radius:4px;color:#2b7b15;font-size:13.5px;line-height:26px;text-align:center">200</div>
<div class="a" style="left:893px;top:1134px;color:#222;font-size:14.6px;line-height:16px;letter-spacing:0.1px">Unknown application (keyless)</div>
<div class="a" style="left:1193px;top:1134px;color:#222;font-size:15px;line-height:16px">wbatest</div>
<div class="a" style="left:1289px;top:1134px;width:33px;height:16px;border-radius:8px;background:#48983d;color:#fff;font-size:9.5px;line-height:16px;text-align:center;letter-spacing:0.6px;text-indent:0.6px">GET</div>
<div class="a" style="left:1365px;top:1135px;color:#222;font-size:14.5px;line-height:16px;letter-spacing:0.35px">/wbatest</div>
<div class="a" style="left:567px;top:1164px;width:956px;height:1px;background:#e0e0e0"></div>
</div>
</div></body></html>
